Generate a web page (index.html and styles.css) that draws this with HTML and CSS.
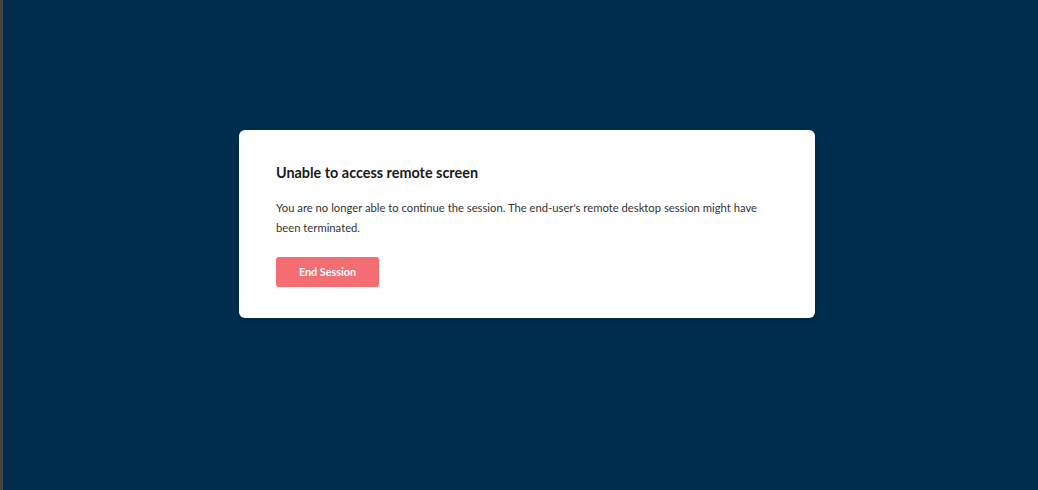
FILE: index.html
```html
<!DOCTYPE html>
<html lang="en">
<head>
    <meta charset="UTF-8">
    <meta name="viewport" content="width=device-width, initial-scale=1.0">
    <title>Session Ended</title>
    <link rel="stylesheet" href="styles.css">
</head>
<body>
    <div class="side-strip"></div>
    <div class="screen">
        <div class="dialog">
            <h2 class="dialog-title">Unable to access remote screen</h2>
            <p class="dialog-text">You are no longer able to continue the session. The end-user's remote desktop session might have been terminated.</p>
            <button class="end-btn">End Session</button>
        </div>
    </div>
</body>
</html>
```

FILE: styles.css
```css
html, body {
    height: 100%;
}

body {
    margin: 0;
    display: flex;
    font-family: Lato, "Open Sans", Arial, sans-serif;
    background-color: #002d4e;
}

.side-strip {
    width: 3px;
    background-color: #454545;
}

.screen {
    flex: 1;
    display: flex;
    justify-content: center;
    align-items: flex-start;
    padding-top: 130px;
    padding-left: 13px;
}

.dialog {
    width: 502px;
    background-color: white;
    padding: 34px 37px 31.5px;
    border-radius: 6px;
    box-shadow: 0 2px 6px rgba(0,0,0,0.2);
}

.dialog-title {
    margin: 0 0 16px;
    font-size: 14.4px;
    font-weight: 700;
    line-height: 18px;
    color: #1a1a1a;
}

.dialog-text {
    margin: 0 0 18.5px;
    font-size: 11.25px;
    line-height: 20px;
    color: #333;
}

.end-btn {
    display: block;
    width: 103px;
    height: 30px;
    padding: 0;
    font-family: inherit;
    font-size: 10.8px;
    font-weight: 700;
    color: white;
    background-color: #f46d73;
    border: none;
    border-radius: 3px;
    cursor: pointer;
}
```
